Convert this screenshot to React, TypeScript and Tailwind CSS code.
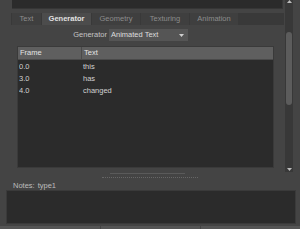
import React from 'react';

const tabs = ['Text', 'Generator', 'Geometry', 'Texturing', 'Animation'];
const rows = [
  { frame: '0.0', text: 'this' },
  { frame: '3.0', text: 'has' },
  { frame: '4.0', text: 'changed' },
];

export default function App() {
  return (
    <div
      className="relative flex h-[229px] w-[300px] flex-col overflow-hidden bg-[#444444] text-[7.5px] leading-none text-[#c8c8c8] antialiased"
      style={{ fontFamily: '"Liberation Sans", Arial, sans-serif' }}
    >
      {/* ── Upper panel with scrollbar ── */}
      <div className="flex h-[172px] shrink-0">
        <div className="ml-[11px] flex w-[273px] flex-col">
          {/* dark box at the top */}
          <div className="ml-[1px] h-[9px] w-[271px] border-b border-r border-[#363636] bg-[#2b2b2b]" />

          {/* Tabs */}
          <div className="mt-[4px] flex h-[12px] gap-[1px] bg-[#393939] pl-[1px]">
            {tabs.map((t) => (
              <div
                key={t}
                className={
                  t === 'Generator'
                    ? 'flex w-[49px] items-center justify-center bg-[#4c4c4c] font-bold text-[#e2e2e2]'
                    : t === 'Text'
                      ? 'flex w-[29px] items-center justify-center bg-[#3f3f3f] text-[#8c8c8c]'
                      : 'flex w-[48px] items-center justify-center bg-[#3f3f3f] text-[#8c8c8c]'
                }
              >
                {t}
              </div>
            ))}
          </div>

          {/* Generator select */}
          <div className="mt-[4px] flex h-[12px] items-center">
            <span className="ml-[62px] w-[34px] text-right text-[#c4c4c4]">Generator</span>
            <div className="ml-[2px] flex h-[12px] w-[79px] items-center justify-between bg-[#555555] pl-[2px] pr-[4px] text-[#dddddd]">
              <span>Animated Text</span>
              <svg width="5" height="3" viewBox="0 0 5 3">
                <path d="M0 0h5L2.5 3z" fill="#cfcfcf" />
              </svg>
            </div>
          </div>

          {/* Table */}
          <div className="ml-[6px] mt-[5px] flex h-[122px] w-[257px] flex-col border border-[#3a3a3a] bg-[#2b2b2b]">
            <div className="flex h-[13px] shrink-0 border-b border-[#4a4a4a] bg-[#5f5f5f] text-[#e4e4e4]">
              <div className="flex w-[64px] items-center border-r border-[#4a4a4a] pl-[2px]">Frame</div>
              <div className="flex flex-1 items-center pl-[2px]">Text</div>
            </div>
            <div className="flex flex-col pt-[1px] text-[#d4d4d4] opacity-[0.99]">
              {rows.map((r) => (
                <div key={r.frame} className="flex h-[12px] items-center">
                  <div className="w-[65px] pl-[1px]">{r.frame}</div>
                  <div>{r.text}</div>
                </div>
              ))}
            </div>
          </div>
        </div>

        {/* Scrollbar */}
        <div className="ml-[1px] flex w-[8px] flex-col items-center justify-between bg-[#383838]">
          <svg width="5" height="3" viewBox="0 0 5 3">
            <path d="M2.5 0L5 3H0z" fill="#bcbcbc" />
          </svg>
          <div className="absolute left-[286px] top-[32px] h-[73px] w-[6px] rounded-[3px] bg-[#5c5c5c]" />
          <svg width="5" height="3" viewBox="0 0 5 3" className="mb-[1px]">
            <path d="M0 0h5L2.5 3z" fill="#bcbcbc" />
          </svg>
        </div>
      </div>

      {/* Splitter */}
      <div className="ml-[110px] mt-[1px] h-px w-[75px] bg-[#5a5a5a]" />
      <div className="ml-[102px] mt-[3px] w-[96px] border-t border-dotted border-[#666666]" />

      {/* Notes */}
      <div className="ml-[13px] mt-[4px] flex h-[7px] items-center gap-[3px] text-[#bdbdbd]">
        <span>Notes:</span>
        <span>type1</span>
      </div>
      <div className="ml-[6px] mt-[1px] h-[37px] w-[290px] border border-[#3a3a3a] bg-[#2b2b2b]" />

      {/* Bottom strip */}
      <div className="mt-[2px] flex h-[3px] gap-[1px]">
        <div className="w-[100px] bg-[#555555]" />
        <div className="w-[99px] bg-[#555555]" />
        <div className="flex-1 bg-[#555555]" />
      </div>
    </div>
  );
}
